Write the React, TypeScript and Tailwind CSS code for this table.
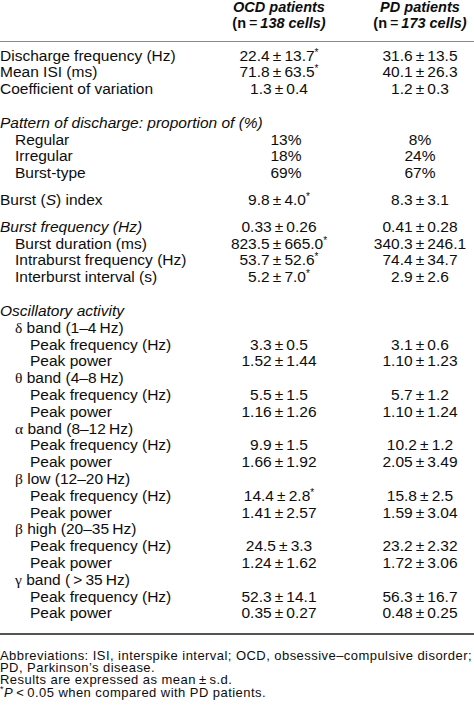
import React from 'react';

type Level = 0 | 1 | 2;

interface RowData {
    label: React.ReactNode;
    ocd?: React.ReactNode;
    pd?: React.ReactNode;
    level?: Level;
    gap?: 'lg' | 'sm';
    pct?: boolean;
}

const TS = '\u2009';

// small raised asterisk used for significant values
const Star = () => <sup className="text-[10px]">*</sup>;

const val = (a: string, b: string, star = false) => (
    <>
        {a}
        {TS}±{TS}
        {b}
        {star && <Star />}
    </>
);

const Greek = ({ c }: { c: string }) => <span className="font-['Liberation_Serif',serif]">{c}</span>;

const rows: RowData[] = [
    { label: 'Discharge frequency (Hz)', ocd: val('22.4', '13.7', true), pd: val('31.6', '13.5') },
    { label: 'Mean ISI (ms)', ocd: val('71.8', '63.5', true), pd: val('40.1', '26.3') },
    { label: 'Coefficient of variation', ocd: val('1.3', '0.4'), pd: val('1.2', '0.3') },

    { label: <i>Pattern of discharge: proportion of (%)</i>, gap: 'lg' },
    { label: 'Regular', ocd: '13%', pd: '8%', level: 1, pct: true },
    { label: 'Irregular', ocd: '18%', pd: '24%', level: 1, pct: true },
    { label: 'Burst-type', ocd: '69%', pd: '67%', level: 1, pct: true },

    { label: <>Burst (<i>S</i>) index</>, ocd: val('9.8', '4.0', true), pd: val('8.3', '3.1'), gap: 'sm' },

    { label: <i>Burst frequency (Hz)</i>, ocd: val('0.33', '0.26'), pd: val('0.41', '0.28'), gap: 'sm' },
    { label: 'Burst duration (ms)', ocd: val('823.5', '665.0', true), pd: val('340.3', '246.1'), level: 1 },
    { label: 'Intraburst frequency (Hz)', ocd: val('53.7', '52.6', true), pd: val('74.4', '34.7'), level: 1 },
    { label: 'Interburst interval (s)', ocd: val('5.2', '7.0', true), pd: val('2.9', '2.6'), level: 1 },

    { label: <i>Oscillatory activity</i>, gap: 'lg' },
    { label: <><Greek c="δ" /> band (1–4{TS}Hz)</>, level: 1 },
    { label: 'Peak frequency (Hz)', ocd: val('3.3', '0.5'), pd: val('3.1', '0.6'), level: 2 },
    { label: 'Peak power', ocd: val('1.52', '1.44'), pd: val('1.10', '1.23'), level: 2 },
    { label: <><Greek c="θ" /> band (4–8{TS}Hz)</>, level: 1 },
    { label: 'Peak frequency (Hz)', ocd: val('5.5', '1.5'), pd: val('5.7', '1.2'), level: 2 },
    { label: 'Peak power', ocd: val('1.16', '1.26'), pd: val('1.10', '1.24'), level: 2 },
    { label: <><Greek c="α" /> band (8–12{TS}Hz)</>, level: 1 },
    { label: 'Peak frequency (Hz)', ocd: val('9.9', '1.5'), pd: val('10.2', '1.2'), level: 2 },
    { label: 'Peak power', ocd: val('1.66', '1.92'), pd: val('2.05', '3.49'), level: 2 },
    { label: <><Greek c="β" /> low (12–20{TS}Hz)</>, level: 1 },
    { label: 'Peak frequency (Hz)', ocd: val('14.4', '2.8', true), pd: val('15.8', '2.5'), level: 2 },
    { label: 'Peak power', ocd: val('1.41', '2.57'), pd: val('1.59', '3.04'), level: 2 },
    { label: <><Greek c="β" /> high (20–35{TS}Hz)</>, level: 1 },
    { label: 'Peak frequency (Hz)', ocd: val('24.5', '3.3'), pd: val('23.2', '2.32'), level: 2 },
    { label: 'Peak power', ocd: val('1.24', '1.62'), pd: val('1.72', '3.06'), level: 2 },
    { label: <><Greek c="γ" /> band ({TS}&gt;{TS}35{TS}Hz)</>, level: 1 },
    { label: 'Peak frequency (Hz)', ocd: val('52.3', '14.1'), pd: val('56.3', '16.7'), level: 2 },
    { label: 'Peak power', ocd: val('0.35', '0.27'), pd: val('0.48', '0.25'), level: 2 },
];

const indent: Record<Level, string> = {
    0: 'pl-0',
    1: 'pl-[15px]',
    2: 'pl-[30px]',
};

function TableRow({ row }: { row: RowData }) {
    const gapCls = row.gap === 'lg' ? 'mt-[17px]' : row.gap === 'sm' ? 'mt-[10px]' : '';
    return (
        <div className={`grid grid-cols-[200px_158px_124px] ${gapCls}`}>
            <div className={`whitespace-nowrap ${indent[row.level ?? 0]}`}>{row.label}</div>
            <div className={`text-center whitespace-nowrap ${row.pct ? 'pl-[14px]' : ''}`}>{row.ocd}</div>
            <div className="text-center whitespace-nowrap">{row.pd}</div>
        </div>
    );
}

export default function App() {
    return (
        <div className="w-[474px] h-[708px] overflow-hidden bg-white text-[#0d0d0d] font-['Liberation_Sans',Arial,sans-serif]">
            <div className="w-[482px]">
                {/* Column headings */}
                <div className="-mt-px grid grid-cols-[200px_158px_124px] text-[14.5px] leading-[16px] font-bold italic">
                    <div />
                    <div className="text-center whitespace-nowrap">
                        OCD patients
                        <br />
                        <span className="not-italic">(n</span>
                        <span className="not-italic font-normal">{TS}={TS}</span>
                        138 cells)
                    </div>
                    <div className="text-center whitespace-nowrap">
                        PD patients
                        <br />
                        <span className="not-italic">(n</span>
                        <span className="not-italic font-normal">{TS}={TS}</span>
                        173 cells)
                    </div>
                </div>

                <div className="mt-[9.5px] h-px bg-[#8a8a8a]" />

                {/* Body */}
                <div className="mt-[6px] text-[15.5px] leading-[16.8px]">
                    {rows.map((row, i) => (
                        <TableRow key={i} row={row} />
                    ))}
                </div>

                <div className="mt-[11px] h-[1.5px] bg-[#555]" />

                {/* Footnotes */}
                <div className="mt-[15px] text-[13px] leading-[12.3px] tracking-[0.45px] whitespace-nowrap">
                    <p>Abbreviations: ISI, interspike interval; OCD, obsessive–compulsive disorder;</p>
                    <p>PD, Parkinson’s disease.</p>
                    <p>Results are expressed as mean{TS}±{TS}s.d.</p>
                    <p>
                        <sup className="text-[9px]">*</sup>
                        <i>P</i>
                        {TS}&lt;{TS}0.05 when compared with PD patients.
                    </p>
                </div>
            </div>
        </div>
    );
}
